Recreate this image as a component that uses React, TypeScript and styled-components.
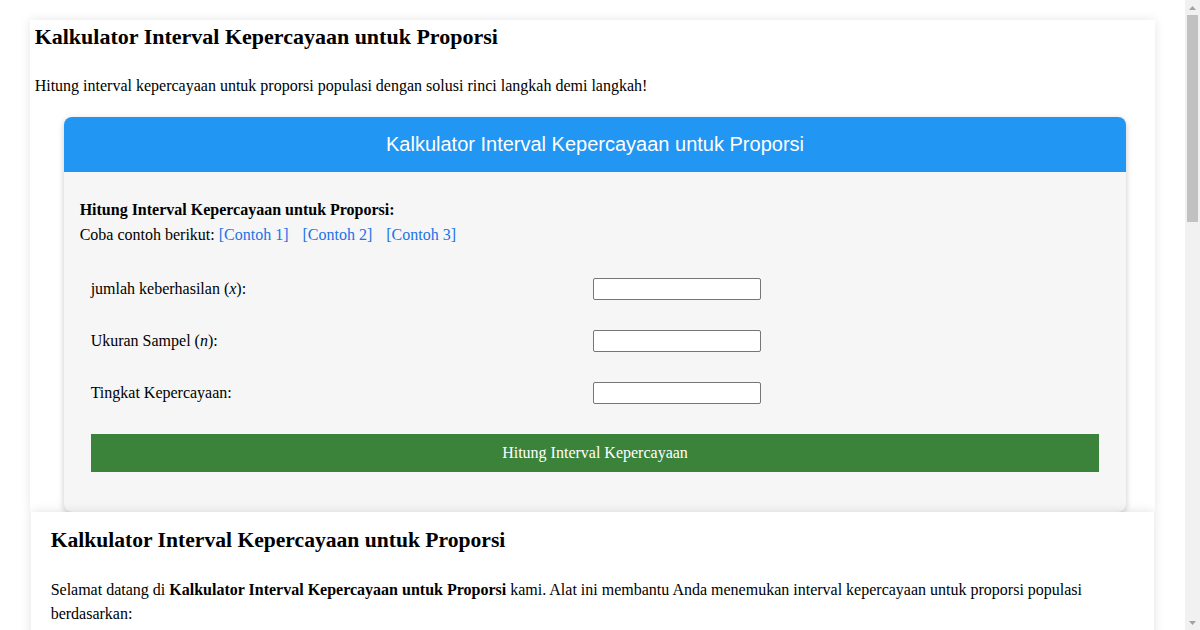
import React from "react";
import styled, { createGlobalStyle } from "styled-components";

const GlobalStyle = createGlobalStyle`
  html, body {
    margin: 0;
    padding: 0;
    background: #ffffff;
  }
  body {
    margin-right: 15px;
    font-family: "Liberation Serif", "Times New Roman", serif;
    font-size: 16px;
    color: #000;
  }
`;

// stand-in for the browser's classic scrollbar seen in the screenshot
const ScrollTrack = styled.div`
  position: fixed;
  top: 0;
  right: 0;
  bottom: 0;
  width: 15px;
  background: #f1f1f1;
  display: flex;
  flex-direction: column;
  align-items: center;
`;

const ScrollArrow = styled.div`
  height: 15px;
  width: 15px;
  display: flex;
  align-items: center;
  justify-content: center;
  flex: none;
`;

const ScrollThumb = styled.div`
  width: 11px;
  height: 207px;
  background: #c1c1c1;
  flex: none;
`;

const ScrollSpacer = styled.div`
  flex: 1;
`;

const Sheet = styled.div`
  width: 95%;
  margin: 20px auto 0;
  padding: 3px 5px 0;
  box-sizing: border-box;
  background: #fff;
  box-shadow: 0 0 10px rgba(0, 0, 0, 0.1);
`;

const Title = styled.h1`
  margin: 0;
  font-size: 22px;
  line-height: 28px;
  font-weight: bold;
`;

const Lead = styled.p`
  margin: 26px 0 22px;
  line-height: 18px;
`;

const Card = styled.div`
  margin: 0 24px 0 29px;
  border-radius: 8px;
  overflow: hidden;
  background: #f6f6f6;
  box-shadow: 0 2px 6px rgba(0, 0, 0, 0.22);
`;

const CardHeader = styled.div`
  height: 55px;
  display: flex;
  align-items: center;
  justify-content: center;
  background: #2196f3;
  color: #fff;
  font-family: "Liberation Sans", Arial, sans-serif;
  font-size: 20px;
`;

const CardBody = styled.div`
  padding: 25px 16px 40px;
`;

const Intro = styled.p`
  margin: 0;
  line-height: 25px;
`;

const ExampleLink = styled.a`
  color: #1a73e8;
  text-decoration: none;
  margin-right: 10px;
  cursor: pointer;
`;

const Form = styled.form`
  margin: 16px 11px 0;
`;

const Fields = styled.div`
  display: grid;
  grid-template-columns: 502px 1fr;
  grid-auto-rows: 52px;
  align-items: center;
`;

const Label = styled.label`
  line-height: 18px;
`;

const Input = styled.input`
  width: 168px;
  height: 22px;
  box-sizing: border-box;
  border: 1px solid #767676;
  border-radius: 2px;
  background: #fff;
  padding: 1px 2px;
  font: inherit;
`;

const Submit = styled.button`
  display: block;
  width: 100%;
  height: 38px;
  margin-top: 15px;
  border: none;
  background: #3b833b;
  color: #fff;
  font-family: "Liberation Serif", "Times New Roman", serif;
  font-size: 16px;
  cursor: pointer;
`;

const Article = styled.div`
  width: calc(95% - 2px);
  margin: 0 auto 40px;
  padding: 14px 20px 30px;
  box-sizing: border-box;
  background: #fff;
  box-shadow: 0 0 10px rgba(0, 0, 0, 0.12);
`;

const ArticleTitle = styled.h2`
  margin: 0;
  font-size: 21.6px;
  line-height: 28px;
`;

const Text = styled.p`
  margin: 24px 0 0;
  line-height: 24px;
`;

const SubTitle = styled.h3`
  margin: 28px 0 0;
  font-size: 18px;
  line-height: 26px;
`;

const List = styled.ul`
  margin: 12px 0 0;
  padding-left: 40px;
  line-height: 24px;
`;

const fields = [
  { id: "x", label: "jumlah keberhasilan", symbol: "x" },
  { id: "n", label: "Ukuran Sampel", symbol: "n" },
  { id: "cl", label: "Tingkat Kepercayaan" },
];

const Arrow = ({ down }: { down?: boolean }) => (
  <svg width="7" height="4" viewBox="0 0 7 4">
    <polygon
      points={down ? "0,0 7,0 3.5,4" : "0,4 7,4 3.5,0"}
      fill="#a3a3a3"
    />
  </svg>
);

export default function App() {
  return (
    <>
      <GlobalStyle />
      <Sheet>
        <Title>Kalkulator Interval Kepercayaan untuk Proporsi</Title>
        <Lead>
          Hitung interval kepercayaan untuk proporsi populasi dengan solusi
          rinci langkah demi langkah!
        </Lead>
        <Card>
          <CardHeader>Kalkulator Interval Kepercayaan untuk Proporsi</CardHeader>
          <CardBody>
            <Intro>
              <strong>Hitung Interval Kepercayaan untuk Proporsi:</strong>
              <br />
              Coba contoh berikut: <ExampleLink>[Contoh 1]</ExampleLink>{" "}
              <ExampleLink>[Contoh 2]</ExampleLink>{" "}
              <ExampleLink>[Contoh 3]</ExampleLink>
            </Intro>
            <Form onSubmit={(e) => e.preventDefault()}>
              <Fields>
                {fields.map((f) => (
                  <React.Fragment key={f.id}>
                    <Label htmlFor={f.id}>
                      {f.label}
                      {f.symbol ? (
                        <>
                          {" "}(<i>{f.symbol}</i>)
                        </>
                      ) : null}
                      :
                    </Label>
                    <div>
                      <Input id={f.id} type="text" />
                    </div>
                  </React.Fragment>
                ))}
              </Fields>
              <Submit type="submit">Hitung Interval Kepercayaan</Submit>
            </Form>
          </CardBody>
        </Card>
      </Sheet>
      <Article>
        <ArticleTitle>Kalkulator Interval Kepercayaan untuk Proporsi</ArticleTitle>
        <Text>
          Selamat datang di{" "}
          <strong>Kalkulator Interval Kepercayaan untuk Proporsi</strong> kami.
          Alat ini membantu Anda menemukan interval kepercayaan untuk proporsi
          populasi berdasarkan:
        </Text>
        <List>
          <li>Jumlah keberhasilan (x) dalam sampel</li>
          <li>Ukuran sampel (n)</li>
          <li>Tingkat kepercayaan yang diinginkan</li>
        </List>
        <SubTitle>Cara Menggunakan Kalkulator</SubTitle>
        <List as="ol">
          <li>Masukkan jumlah keberhasilan (x) yang diamati dalam sampel.</li>
          <li>Masukkan ukuran sampel (n).</li>
          <li>Masukkan tingkat kepercayaan, misalnya 95.</li>
          <li>Klik tombol "Hitung Interval Kepercayaan".</li>
        </List>
        <SubTitle>Rumus yang Digunakan</SubTitle>
        <Text>
          Proporsi sampel dihitung sebagai p̂ = x / n. Galat baku proporsi adalah
          SE = √(p̂(1 − p̂) / n). Interval kepercayaan kemudian diperoleh dengan
          p̂ ± z × SE, di mana z adalah nilai kritis dari distribusi normal baku
          yang sesuai dengan tingkat kepercayaan yang dipilih.
        </Text>
        <SubTitle>Contoh</SubTitle>
        <Text>
          Misalkan dari 200 responden, 120 orang menyatakan setuju. Proporsi
          sampel adalah 0,6. Dengan tingkat kepercayaan 95% (z = 1,96), galat
          baku adalah 0,0346, sehingga margin kesalahan adalah 0,0679. Interval
          kepercayaan 95% adalah (0,5321; 0,6679).
        </Text>
        <SubTitle>Interpretasi Hasil</SubTitle>
        <Text>
          Interval kepercayaan memberikan rentang nilai yang kemungkinan besar
          memuat proporsi populasi yang sebenarnya. Semakin tinggi tingkat
          kepercayaan, semakin lebar interval yang dihasilkan. Semakin besar
          ukuran sampel, semakin sempit interval yang dihasilkan.
        </Text>
        <SubTitle>Catatan</SubTitle>
        <List>
          <li>Pastikan nilai x tidak lebih besar dari n.</li>
          <li>Metode ini paling akurat bila n × p̂ dan n × (1 − p̂) keduanya minimal 10.</li>
          <li>Tingkat kepercayaan umum adalah 90%, 95%, dan 99%.</li>
        </List>
        <Text>
          Kalkulator ini menampilkan solusi langkah demi langkah sehingga Anda
          dapat memahami setiap bagian perhitungan, mulai dari proporsi sampel
          hingga batas bawah dan batas atas interval kepercayaan.
        </Text>
        <Text>
          Gunakan hasil perhitungan ini untuk laporan penelitian, survei, atau
          tugas statistika Anda.
        </Text>
      </Article>
      <ScrollTrack aria-hidden="true">
        <ScrollArrow>
          <Arrow />
        </ScrollArrow>
        <ScrollThumb />
        <ScrollSpacer />
        <ScrollArrow>
          <Arrow down />
        </ScrollArrow>
      </ScrollTrack>
    </>
  );
}
